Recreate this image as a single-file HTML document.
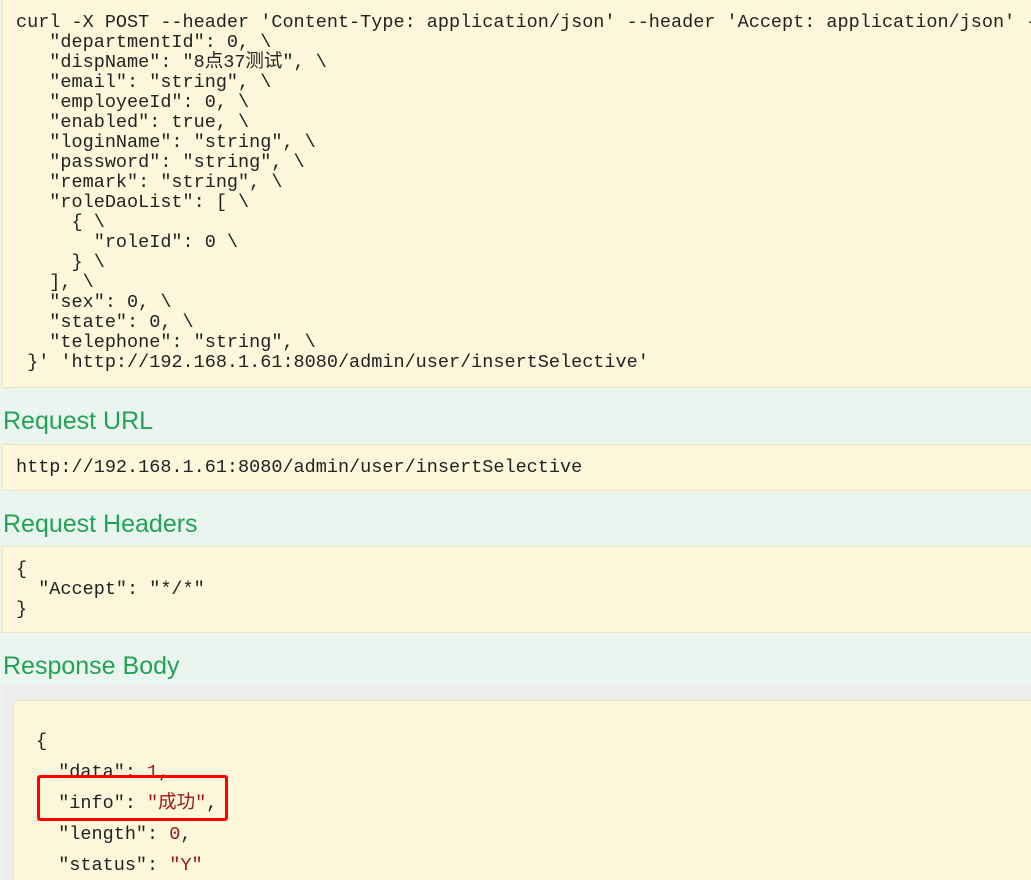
<!DOCTYPE html>
<html><head><meta charset="utf-8"><style>
html,body{overflow:hidden;}
body{margin:0;width:1031px;height:880px;background:#ebf5ef;position:relative;font-family:"Liberation Mono","Noto Sans CJK SC",monospace;}
.box{position:absolute;left:2px;right:0;background:#fcf6db;border:1px solid #ece4c0;border-right:none;box-sizing:border-box;overflow:hidden;}
pre{margin:0;font-family:"Liberation Mono","Noto Sans CJK SC",monospace;font-size:18.5px;color:#222;white-space:pre;}
.h{position:absolute;left:3px;font-family:"Liberation Sans",sans-serif;font-size:25px;color:#22a355;}
.s{color:#a31515}
</style></head><body>
<div class="box" style="top:-2px;height:390px;"><pre style="position:absolute;left:13px;top:14px;line-height:20px;">curl -X POST --header 'Content-Type: application/json' --header 'Accept: application/json' -d '{ \
   "departmentId": 0, \
   "dispName": "8点37测试", \
   "email": "string", \
   "employeeId": 0, \
   "enabled": true, \
   "loginName": "string", \
   "password": "string", \
   "remark": "string", \
   "roleDaoList": [ \
     { \
       "roleId": 0 \
     } \
   ], \
   "sex": 0, \
   "state": 0, \
   "telephone": "string", \
 }' 'http://192.168.1.61:8080/admin/user/insertSelective'</pre></div>
<div class="h" style="top:407px;">Request URL</div>
<div class="box" style="top:444px;height:47px;"><pre style="position:absolute;left:13px;top:12px;">http://192.168.1.61:8080/admin/user/insertSelective</pre></div>
<div class="h" style="top:510px;">Request Headers</div>
<div class="box" style="top:546px;height:87px;"><pre style="position:absolute;left:13px;top:13px;line-height:20px;">{
  "Accept": "*/*"
}</pre></div>
<div class="h" style="top:652px;">Response Body</div>
<div style="position:absolute;left:2px;right:0;top:683px;bottom:0;background:#eeeeee;"></div>
<div class="box" style="top:700px;left:13px;height:180px;border-bottom:none;"><pre style="position:absolute;left:22px;top:25px;line-height:31px;">{
  "data": <span class="s">1</span>,
  "info": <span class="s">"成功"</span>,
  "length": <span class="s">0</span>,
  "status": <span class="s">"Y"</span></pre></div>
<div style="position:absolute;left:37px;top:775px;width:191px;height:46px;border:3px solid #f00;border-radius:3px;box-sizing:border-box;"></div>
</body></html>
